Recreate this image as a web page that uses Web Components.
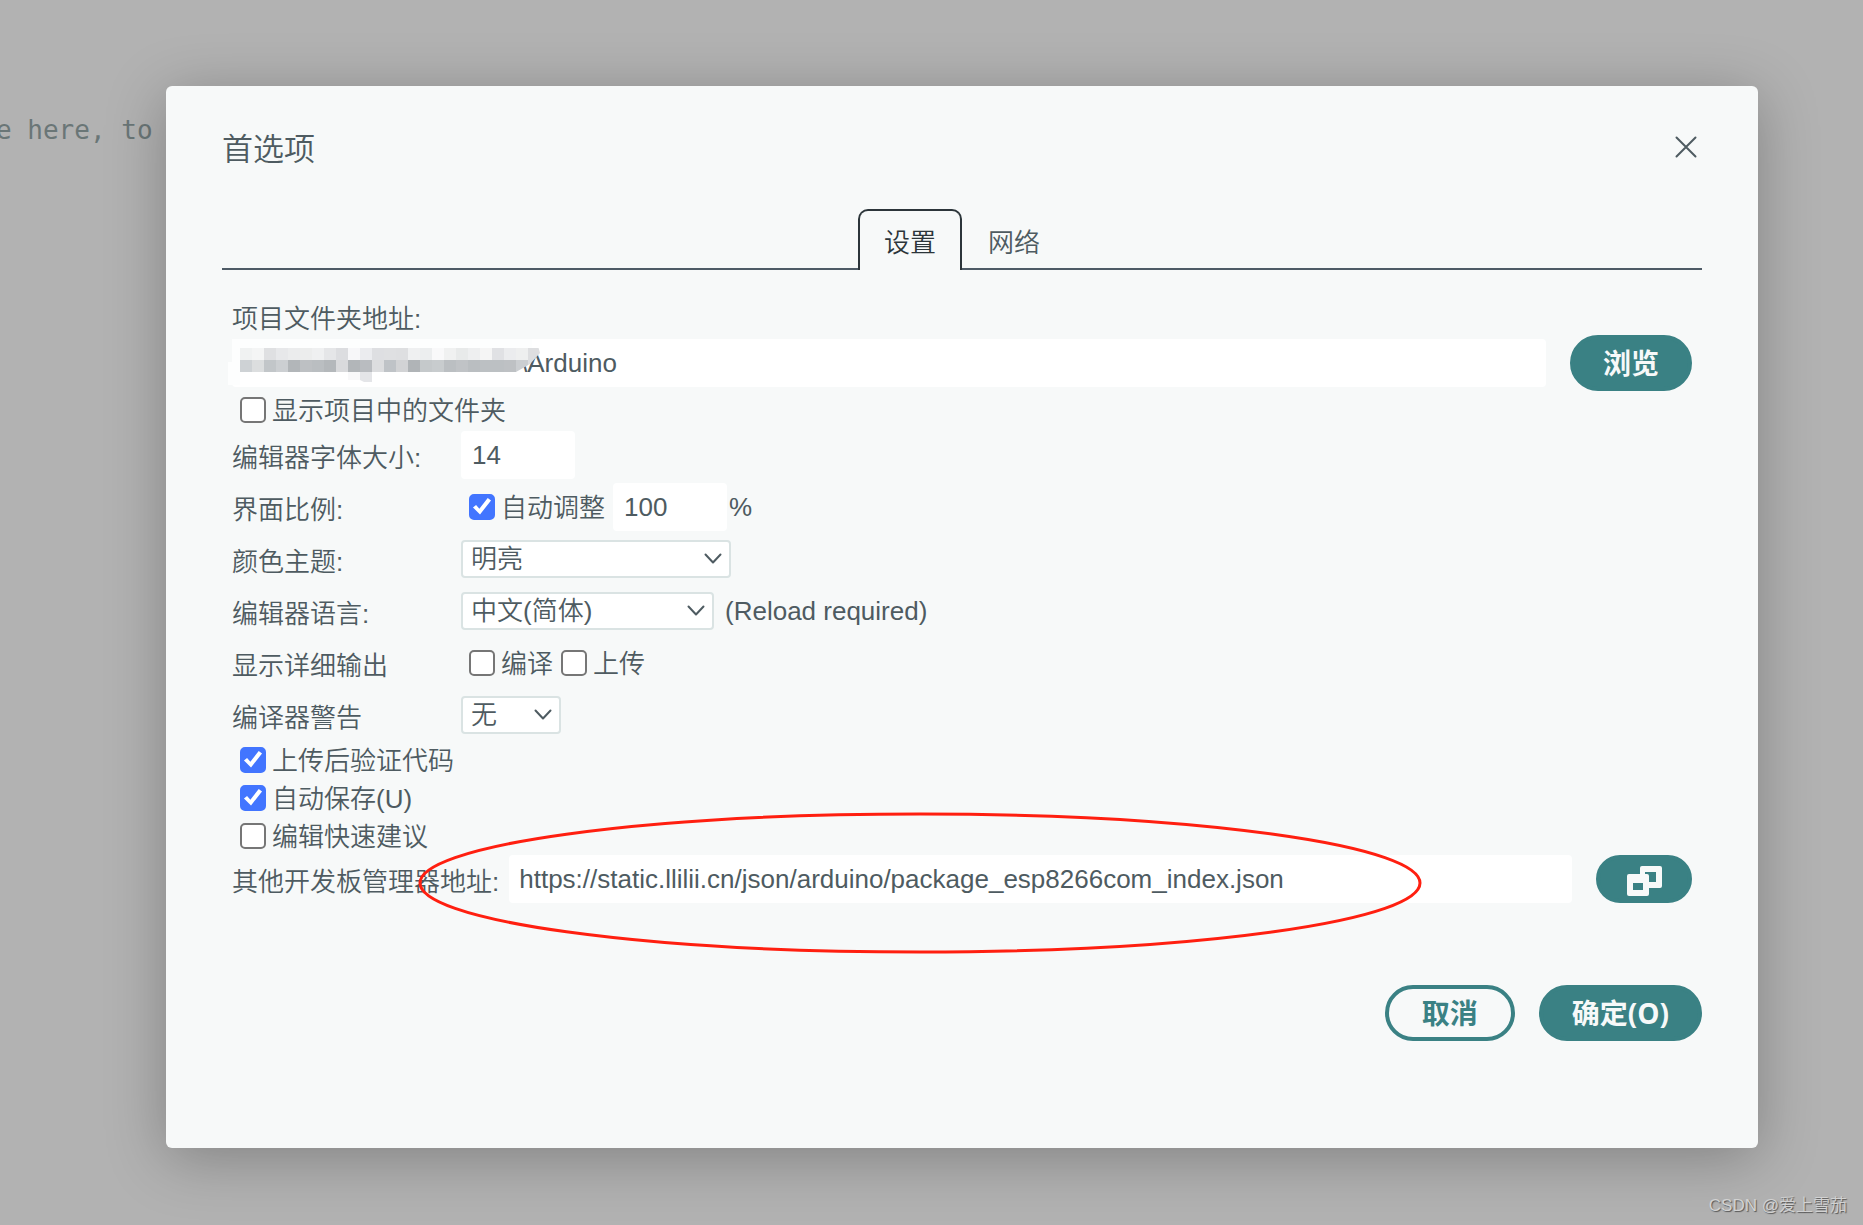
<!DOCTYPE html>
<html lang="zh-CN">
<head>
<meta charset="utf-8">
<title>首选项</title>
<style>
  body{
    margin:0;
    background:#b2b2b2;
    color:#4e5b61;
    font-family:"Liberation Sans","Noto Sans CJK SC",sans-serif;
    font-size:26px;
    font-weight:350;
  }
</style>
</head>
<body>
<pref-app>
  <span slot="code">e here, to</span>
  <pref-dialog heading="首选项">
    <pref-tabs slot="tabs"></pref-tabs>
    <pref-settings></pref-settings>
    <pref-button slot="actions" kind="outline">取消</pref-button>
    <pref-button slot="actions">确定(O)</pref-button>
  </pref-dialog>
  <span slot="mark">CSDN @爱上雪茄</span>
</pref-app>

<script>
(() => {
  const define = (name, html, setup) => {
    if (customElements.get(name)) return;
    const tpl = document.createElement('template');
    tpl.innerHTML = html;
    customElements.define(name, class extends HTMLElement {
      constructor() {
        super();
        this.attachShadow({ mode: 'open' }).appendChild(tpl.content.cloneNode(true));
      }
      connectedCallback() { if (setup) setup(this, this.shadowRoot); }
    });
  };

  // Dimmed editor behind the dialog
  define('pref-app', `
    <style>
      :host{
        display:flex;
        position:relative;
        box-sizing:border-box;
        min-height:100vh;
        padding:86px 105px 77px 166px;
        overflow:hidden;
      }
      .code{
        position:absolute; top:114px; left:-4px;
        color:#6a7677;
        font:26px/32px "DejaVu Sans Mono",monospace;
        white-space:pre;
      }
      .mark{
        position:absolute; right:16px; bottom:6px;
        color:#d2d2d2;
        font-size:17px; line-height:26px;
        text-shadow:1px 1px 1px #555;
      }
    </style>
    <div class="code"><slot name="code"></slot></div>
    <slot></slot>
    <div class="mark"><slot name="mark"></slot></div>
  `);

  define('pref-dialog', `
    <style>
      :host{
        display:block;
        position:relative;
        flex:1;
        min-width:0;
        box-sizing:border-box;
        padding:32px 56px;
        border-radius:6px;
        background:#f7f9f9;
        box-shadow:0 10px 60px rgba(0,0,0,.27);
      }
      header{
        display:flex; align-items:center; justify-content:space-between;
        height:60px; margin-bottom:31px;
      }
      h1{ margin:0; padding-top:4px; font-size:31px; font-weight:inherit; line-height:40px; }
      .close{
        display:flex; padding:5px 5px 7px; margin:0; border:0;
        background:none; color:#4e5b61;
      }
      main{ margin-top:31px; padding:0 10px; }
      footer{ display:flex; justify-content:flex-end; gap:24px; margin-top:82px; }
    </style>
    <header>
      <h1></h1>
      <button class="close" aria-label="关闭">
        <svg width="22" height="22" viewBox="0 0 22 22" fill="none" stroke="currentColor" stroke-width="2" stroke-linecap="round"><path d="M1.500 1.500L20.500 20.500M20.500 1.500L1.500 20.500"/></svg>
      </button>
    </header>
    <slot name="tabs"></slot>
    <main><slot></slot></main>
    <footer><slot name="actions"></slot></footer>
  `, (el, root) => {
    root.querySelector('h1').textContent = el.getAttribute('heading') || '';
  });

  define('pref-tabs', `
    <style>
      :host{ display:block; }
      div{ display:flex; justify-content:center; border-bottom:2px solid #4e5b66; }
      button{
        box-sizing:border-box;
        height:61px;
        margin:0 0 -2px;
        padding:0 24px;
        border:2px solid transparent;
        border-bottom:0;
        border-radius:10px 10px 0 0;
        background:none;
        color:#4e5b61;
        font:inherit;
      }
      button[aria-selected="true"]{ border-color:#2c353a; background:#f7f9f9; color:#2c353a; }
    </style>
    <div role="tablist">
      <button role="tab" aria-selected="true">设置</button>
      <button role="tab" aria-selected="false">网络</button>
    </div>
  `);

  define('pref-button', `
    <style>
      :host{ display:block; flex:none; }
      button{
        display:flex; align-items:center; justify-content:center;
        box-sizing:border-box;
        height:56px;
        margin:0;
        padding:0 29px;
        border:4px solid #3a8184;
        border-radius:28px;
        background:#3a8184;
        color:#f7f9f9;
        font:700 28px/40px "Open Sans","Noto Sans CJK SC",sans-serif;
        white-space:nowrap;
      }
      :host([kind="outline"]) button{ padding:0 33px; background:transparent; color:#3a8184; }
      :host([kind="icon"]) button{ height:48px; width:96px; padding:4px 0 0; }
    </style>
    <button><slot></slot></button>
  `, (el, root) => {
    const label = el.getAttribute('label');
    if (label) root.querySelector('button').setAttribute('aria-label', label);
  });

  define('pref-check', `
    <style>
      :host{ display:block; }
      label{ display:flex; align-items:center; gap:6px; height:38px; line-height:36px; white-space:nowrap; }
      input{
        appearance:none;
        flex:none;
        box-sizing:border-box;
        width:26px; height:26px;
        margin:0;
        border:2px solid #767676;
        border-radius:5px;
        background:#fff;
      }
      input:checked{ border-color:#4275ff; background:#4275ff; }
      input:checked::before{
        content:"";
        display:block;
        width:22px; height:22px;
        background:#fff;
        clip-path:polygon(9% 52%,23% 41%,38% 58%,76% 9%,91% 20%,41% 84%);
      }
      span{ padding-top:2px; }
    </style>
    <label><input type="checkbox"><span><slot></slot></span></label>
  `, (el, root) => {
    root.querySelector('input').checked = el.hasAttribute('checked');
  });

  // Censored part of the path: 12px blocks, two full rows and a short tail
  define('pref-mosaic', `
    <style>
      :host{ display:block; width:312px; height:48px; }
      svg{ display:block; }
    </style>
    <svg width="312" height="48" viewBox="0 0 312 48" aria-hidden="true">
      <path fill="#fdfefe" d="M0 23h4V0h300v9H12v37H0z"/>
      <clipPath id="edge"><path d="M12 0H308L312 14L302 25L288 33H12z"/></clipPath>
      <g id="cells" clip-path="url(#edge)"></g>
      <path fill="#f8f8f9" d="M120 33h12v8h-12z"/>
      <path fill="#e4e5e8" d="M132 33h12v10h-8l-4-2z"/>
    </svg>
  `, (el, root) => {
    const rows = [
      'f0f2f2 f4f5f5 dfe0e2 e7e8ea ebeced eceded eff0f1 e5e6e8 dcdde0 f7f7f9 ebecef dedfe2 dfe0e2 dedfe1 eff0f1 eceeef f9f9fa f0f1f1 e8eaea eeeff0 f5f5f5 e0e1e4 ebecee eeefef dddee0',
      'ced2d5 dcdedf c2c6c9 cccfd2 b2b6b9 bdc0c3 babec1 b4b8bb d9dadc b2b6b9 b9bcc0 dcdddf bfc3c7 d2d3d5 b0b4b7 c5c9cb c8ccce bbbfc2 c0c3c6 babec1 bcc0c3 bcc0c3 bec1c4 cbced1 dcdde0'
    ];
    root.getElementById('cells').innerHTML = rows.map((row, y) =>
      row.split(' ').map((c, x) =>
        `<rect x="${12 + x * 12}" y="${9 + y * 12}" width="12" height="12" fill="#${c}"/>`).join('')).join('');
  });

  const chevron = '<svg width="18" height="12" viewBox="0 0 18 12" fill="none" stroke="#4e5b61" stroke-width="2" stroke-linecap="round" stroke-linejoin="round"><path d="M1.500 1.500L9 9.500L16.500 1.500"/></svg>';

  define('pref-settings', `
    <style>
      :host{ display:block; }
      label, .caption{ white-space:nowrap; }
      .row{ display:flex; align-items:center; }
      .grid{
        display:grid;
        grid-template-columns:229px 1fr;
        grid-auto-rows:52px;
        align-items:center;
      }
      .grid > .row{ gap:8px; }
      .grid > .checked{ padding-left:8px; }
      input{
        box-sizing:border-box;
        height:48px; width:114px;
        margin:0; padding:0 11px;
        border:0; border-radius:4px;
        background:#fff; color:#4e5b61;
        font:inherit;
      }
      .top{ display:block; padding-top:2px; line-height:32px; }
      .path{ gap:24px; height:56px; }
      .field{ position:relative; flex:1; display:flex; }
      .field input{ width:100%; padding-left:288px; }
      .field pref-mosaic{ position:absolute; left:-4px; top:0; }
      .checks{ padding-left:8px; }
      .select{ display:grid; align-items:center; }
      .select > *{ grid-area:1 / 1; }
      .select svg{ justify-self:end; margin-right:9px; pointer-events:none; }
      select{
        appearance:none;
        box-sizing:border-box;
        height:38px; width:100%;
        margin:0; padding:0 8px;
        border:2px solid #dae3e3; border-radius:4px;
        background:#fff; color:#4e5b61;
        font:inherit; line-height:34px;
      }
      .theme{ width:270px; }
      .lang{ width:253px; }
      .warn{ width:100px; }
      .percent{ display:flex; align-items:center; gap:2px; }
      .note{ padding-left:3px; }
      .urls{ position:relative; }
      .urls input{ flex:1; width:0; margin:0 24px 0 10px; padding:0 10px; }
      /* Highlight drawn round the address */
      .ring{ position:absolute; left:186px; top:-43px; pointer-events:none; }
    </style>

    <label class="top" for="path">项目文件夹地址:</label>
    <div class="row path">
      <div class="field">
        <input id="path" type="text" value="\\Arduino">
        <pref-mosaic></pref-mosaic>
      </div>
      <pref-button>浏览</pref-button>
    </div>
    <div class="checks"><pref-check>显示项目中的文件夹</pref-check></div>

    <div class="grid">
      <label for="size">编辑器字体大小:</label>
      <div class="row"><input id="size" type="text" value="14"></div>

      <label for="scale">界面比例:</label>
      <div class="row checked">
        <pref-check checked>自动调整</pref-check>
        <span class="percent"><input id="scale" type="text" value="100">%</span>
      </div>

      <label for="theme">颜色主题:</label>
      <div class="row">
        <div class="select theme"><select id="theme"><option>明亮</option></select>${chevron}</div>
      </div>

      <label for="lang">编辑器语言:</label>
      <div class="row">
        <div class="select lang"><select id="lang"><option>中文(简体)</option></select>${chevron}</div>
        <span class="note">(Reload required)</span>
      </div>

      <span class="caption">显示详细输出</span>
      <div class="row checked">
        <pref-check>编译</pref-check>
        <pref-check>上传</pref-check>
      </div>

      <label for="warn">编译器警告</label>
      <div class="row">
        <div class="select warn"><select id="warn"><option>无</option></select>${chevron}</div>
      </div>
    </div>

    <div class="checks">
      <pref-check checked>上传后验证代码</pref-check>
      <pref-check checked>自动保存(U)</pref-check>
      <pref-check>编辑快速建议</pref-check>
    </div>

    <div class="row urls">
      <label for="urls">其他开发板管理器地址:</label>
      <input id="urls" type="text" value="https://static.llilii.cn/json/arduino/package_esp8266com_index.json">
      <pref-button kind="icon" label="编辑地址">
        <svg width="35" height="30" viewBox="0 0 35 30" fill="#f7f9f9"><path fill-rule="evenodd" d="M15 0h18a2 2 0 0 1 2 2v18a2 2 0 0 1-2 2H13V2a2 2 0 0 1 2-2zM18 6v10h11V6z"/><rect y="8" width="22" height="22" rx="2"/><path fill="#3a8184" d="M6 17h10v7H6z"/></svg>
      </pref-button>
      <svg class="ring" width="1004" height="142" viewBox="0 0 1004 142" fill="none" stroke="#ff1f10" stroke-width="3" aria-hidden="true"><ellipse cx="502" cy="71" rx="500" ry="69"/></svg>
    </div>
  `);
})();
</script>
</body>
</html>
